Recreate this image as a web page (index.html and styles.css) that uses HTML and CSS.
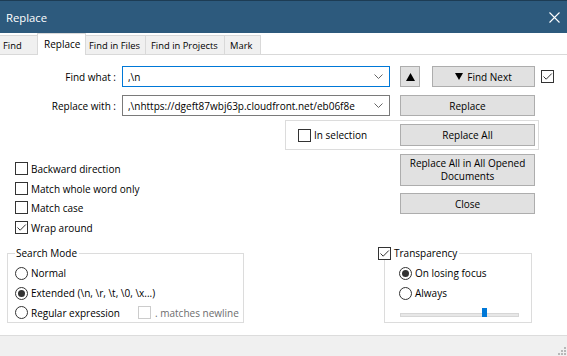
FILE: index.html
```html
<!DOCTYPE html>
<html>
<head>
<meta charset="utf-8">
<link rel="stylesheet" href="styles.css">
</head>
<body>
<div class="window">
  <div class="titlebar">
    <span class="title">Replace</span>
    <svg class="close" width="11" height="11" viewBox="0 0 11 11"><path d="M0.5 0.5L10.5 10.5M10.5 0.5L0.5 10.5" stroke="#fff" stroke-width="1.1" fill="none"/></svg>
  </div>
  <div class="tabs">
    <div class="tab t-find">Find</div>
    <div class="tab t-replace active">Replace</div>
    <div class="tab t-files">Find in Files</div>
    <div class="tab t-proj">Find in Projects</div>
    <div class="tab t-mark">Mark</div>
  </div>
  <div class="body">
    <div class="row r1">
      <span class="lbl">Find what :</span>
      <div class="combo focus"><span class="val">,\n</span><svg class="chev" width="9" height="5" viewBox="0 0 9 5"><path d="M0.5 0.5L4.5 4.5L8.5 0.5" stroke="#666" fill="none"/></svg></div>
      <button class="btn up"><svg width="9" height="8" viewBox="0 0 9 8"><path d="M4.5 0L9 8H0Z" fill="#000"/></svg></button>
      <button class="btn next"><svg width="8" height="7" viewBox="0 0 8 7"><path d="M0 0H8L4 7Z" fill="#000"/></svg>Find Next</button>
      <span class="cb checked side"><svg width="11" height="11" viewBox="0 0 11 11"><path d="M1.5 5.5L4.2 8.2L9.8 2.5" stroke="#333" stroke-width="1" fill="none"/></svg></span>
    </div>
    <div class="row r2">
      <span class="lbl">Replace with :</span>
      <div class="combo"><span class="val">,\nhttps://dgeft87wbj63p.cloudfront.net/eb06f8e</span><svg class="chev" width="9" height="5" viewBox="0 0 9 5"><path d="M0.5 0.5L4.5 4.5L8.5 0.5" stroke="#666" fill="none"/></svg></div>
      <button class="btn wide">Replace</button>
    </div>
    <div class="selgroup">
      <label class="check"><span class="cb"></span>In selection</label>
      <button class="btn wide tall">Replace All</button>
    </div>
    <div class="middle">
      <div class="options">
        <label class="check opt"><span class="cb"></span>Backward direction</label>
        <label class="check opt"><span class="cb"></span>Match whole word only</label>
        <label class="check opt"><span class="cb"></span>Match case</label>
        <label class="check opt"><span class="cb checked"><svg width="11" height="11" viewBox="0 0 11 11"><path d="M1.5 5.5L4.2 8.2L9.8 2.5" stroke="#333" stroke-width="1" fill="none"/></svg></span>Wrap around</label>
      </div>
      <div class="actions">
        <button class="btn wide big">Replace All in All Opened<br>Documents</button>
        <button class="btn wide close-btn">Close</button>
      </div>
    </div>
    <div class="bottom">
      <fieldset class="group search">
        <legend>Search Mode</legend>
        <label class="radio"><span class="rb"></span>Normal</label>
        <label class="radio"><span class="rb on"></span>Extended (\n, \r, \t, \0, \x...)</label>
        <label class="radio"><span class="rb"></span>Regular expression<span class="cb dis"></span><span class="distext">. matches newline</span></label>
      </fieldset>
      <fieldset class="group transp">
        <legend><span class="cb checked"><svg width="11" height="11" viewBox="0 0 11 11"><path d="M1.5 5.5L4.2 8.2L9.8 2.5" stroke="#333" stroke-width="1" fill="none"/></svg></span>Transparency</legend>
        <label class="radio"><span class="rb on"></span>On losing focus</label>
        <label class="radio"><span class="rb"></span>Always</label>
        <div class="slider"><div class="track"></div><div class="thumb"></div></div>
      </fieldset>
    </div>
  </div>
  <div class="status">
    <svg class="grip" width="9" height="9" viewBox="0 0 9 9"><g fill="#b8b8b8"><rect x="7" y="1" width="2" height="2"/><rect x="4" y="4" width="2" height="2"/><rect x="7" y="4" width="2" height="2"/><rect x="1" y="7" width="2" height="2"/><rect x="4" y="7" width="2" height="2"/><rect x="7" y="7" width="2" height="2"/></g></svg>
  </div>
</div>
</body>
</html>
```
FILE: styles.css
```css
* { box-sizing: border-box; }
html, body { margin: 0; padding: 0; }
body {
  width: 567px;
  height: 356px;
  overflow: hidden;
  font-family: "Open Sans", "Noto Sans", sans-serif;
  font-size: 10px;
  color: #000;
  background: #fff;
  white-space: nowrap;
}
.window { display: flex; flex-direction: column; height: 356px; }

.titlebar {
  flex: none;
  height: 33px;
  background: #2d5a7d;
  border-top: 1px solid #1d3c54;
  display: flex;
  align-items: center;
  justify-content: space-between;
  padding: 0 7px 0 6px;
  color: #fff;
  font-size: 11.3px;
}
.close { display: block; }

.tabs {
  flex: none;
  height: 22px;
  display: flex;
  align-items: flex-end;
  border-bottom: 1px solid #d9d9d9;
  font-size: 9.4px;
}
.tab {
  height: 19px;
  background: #f0f0f0;
  border: 1px solid #d9d9d9;
  border-bottom: none;
  margin-left: -1px;
  display: flex;
  align-items: center;
  padding-left: 4px;
  overflow: hidden;
}
.tab.active {
  height: 22px;
  margin-bottom: -1px;
  background: #fff;
  padding-left: 6px;
  padding-bottom: 2px;
  z-index: 1;
  font-size: 10px;
}
.t-find { width: 38px; margin-left: 0; border-left: none; padding-left: 3px; }
.t-replace { width: 49px; }
.t-files { width: 61px; padding-left: 3px; }
.t-proj { width: 80px; padding-left: 5px; }
.t-mark { width: 37px; padding-left: 5px; }

.body { flex: 1; display: flex; flex-direction: column; }

.row { display: flex; align-items: center; height: 21px; }
.r1 { margin-top: 11px; }
.r2 { margin-top: 8px; }
.lbl { width: 117px; text-align: right; padding-right: 1px; }
.combo {
  margin-left: 5px;
  width: 268px;
  height: 21px;
  border: 1px solid #7a7a7a;
  display: flex;
  align-items: center;
  padding-left: 5px;
  padding-right: 6px;
}
.combo.focus { border-color: #0078d7; }
.combo .val { flex: 1; overflow: hidden; }
.chev { flex: none; margin-left: 4px; }

.btn {
  font: inherit;
  color: #000;
  background: #e1e1e1;
  border: 1px solid #adadad;
  padding: 0;
  height: 21px;
  display: flex;
  align-items: center;
  justify-content: center;
}
.up { margin-left: 10px; width: 20px; }
.next { margin-left: 12px; width: 103px; gap: 4px; }
.wide { width: 135px; }
.r2 .wide { margin-left: 10px; }

.cb {
  flex: none;
  width: 13px;
  height: 13px;
  border: 1px solid #333;
  background: #fff;
  display: inline-flex;
  align-items: center;
  justify-content: center;
}
.cb svg { display: block; }
.side { margin-left: 6px; }

.check { display: flex; align-items: center; gap: 3px; }

.selgroup {
  margin-top: 4px;
  margin-left: 285px;
  width: 254px;
  height: 30px;
  border: 1px solid #dcdcdc;
  display: flex;
  align-items: center;
  justify-content: space-between;
  padding: 0 3px 0 12px;
}
.tall { height: 22px; }

.middle {
  height: 96px;
  display: grid;
  grid-template-columns: 400px 135px;
}
.options { padding: 12px 0 0 15px; display: flex; flex-direction: column; }
.opt { height: 19.5px; align-items: flex-start; }
.actions { padding-top: 4px; display: flex; flex-direction: column; gap: 7px; }
.big { height: 32px; line-height: 13px; text-align: center; }
.close-btn { height: 21px; }

.bottom { display: flex; align-items: flex-start; }
.group {
  margin: 0;
  border: 1px solid #dcdcdc;
  padding: 3px 0 0 0;
  height: 77px;
  display: flex;
  flex-direction: column;
}
.group legend {
  padding: 0 2px 0 1px;
  line-height: 14px;
  display: flex;
  align-items: center;
  gap: 3px;
}
.search { margin-left: 7px; width: 237px; padding-left: 7px; }
.transp { margin-left: 140px; width: 148px; padding-left: 14px; }
.transp legend { margin-left: -21px; padding-left: 0; padding-right: 2px; }

.radio { display: flex; align-items: center; gap: 3px; height: 20px; }
.radio:nth-of-type(3) { height: 19px; }
.rb {
  flex: none;
  width: 13px;
  height: 13px;
  border: 1px solid #333;
  border-radius: 50%;
  background: #fff;
  display: inline-flex;
  align-items: center;
  justify-content: center;
}
.rb.on::after {
  content: "";
  width: 7px;
  height: 7px;
  border-radius: 50%;
  background: #333;
}
.cb.dis { border-color: #cccccc; margin-left: 15px; }
.distext { color: #6d6d6d; margin-left: 1px; }

.slider { position: relative; height: 14px; margin-top: 5px; width: 119px; margin-left: 1px; }
.track {
  position: absolute;
  left: 0; right: 0; top: 5px;
  height: 4px;
  background: #e7e7e7;
  border: 1px solid #d6d6d6;
}
.thumb {
  position: absolute;
  left: 82px; top: 0;
  width: 5px; height: 9px;
  background: #0078d7;
}

.status {
  flex: none;
  height: 21px;
  background: #f0f0f0;
  border-top: 1px solid #dcdcdc;
  display: flex;
  justify-content: flex-end;
  align-items: flex-end;
  padding: 0 1px 1px 0;
}
.grip { display: block; }
```
